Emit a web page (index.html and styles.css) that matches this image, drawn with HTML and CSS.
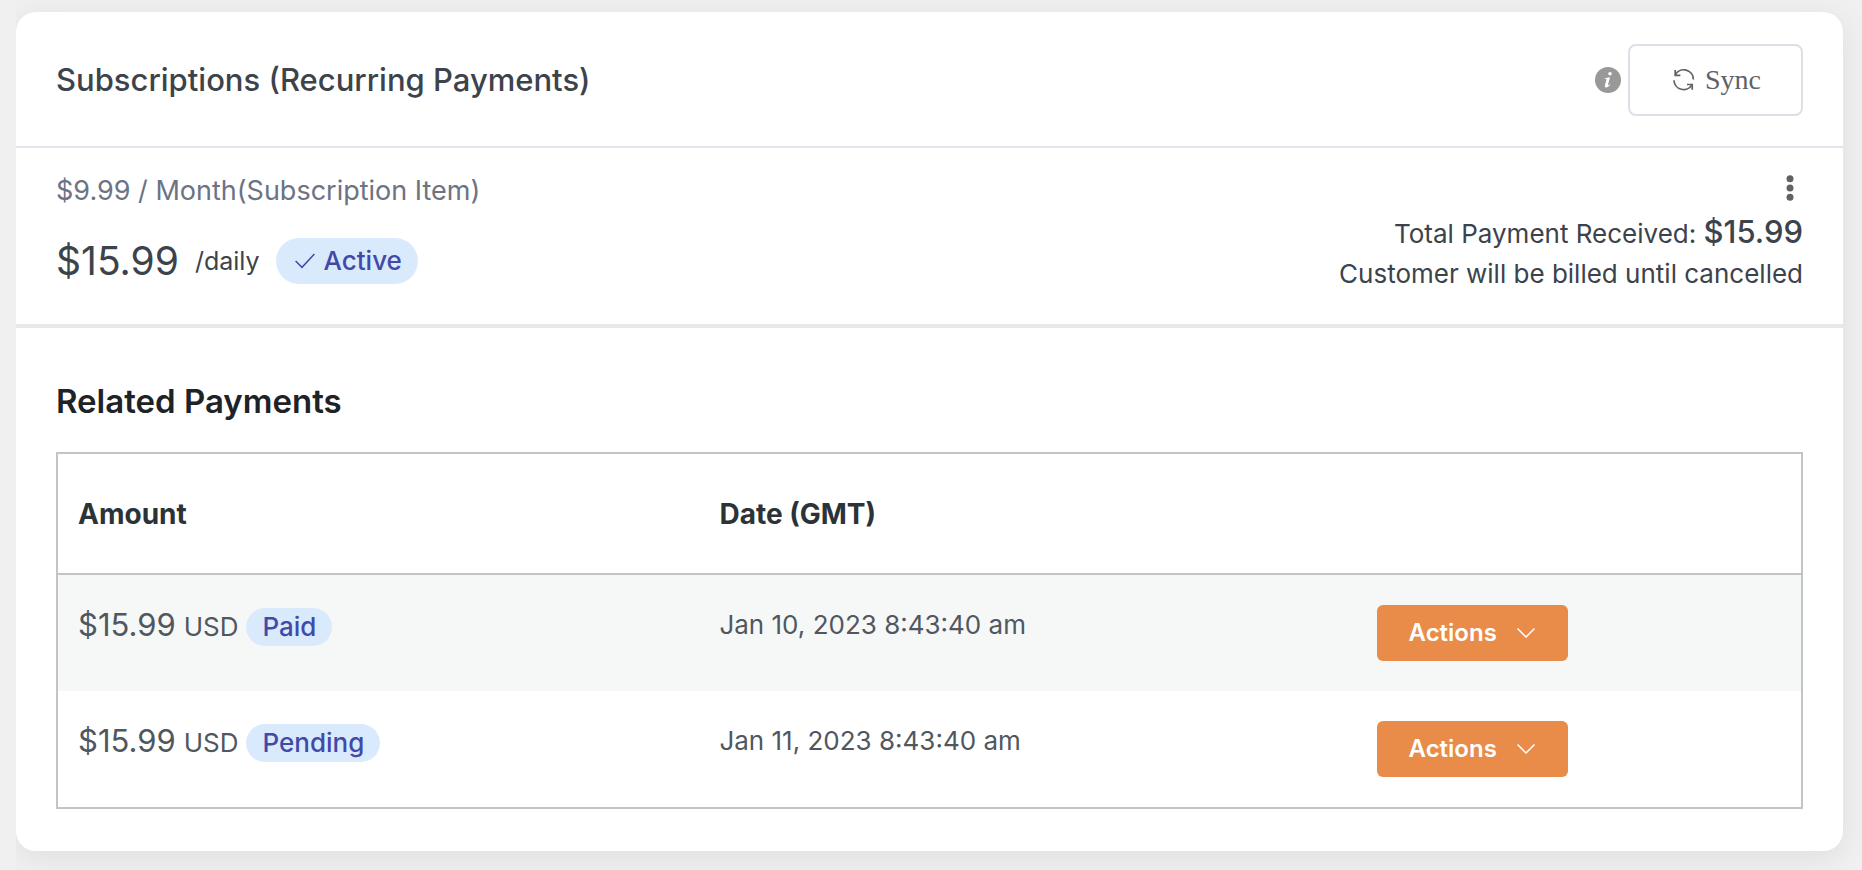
FILE: index.html
```html
<!DOCTYPE html>
<html lang="en">

<head>
    <meta charset="UTF-8">
    <meta name="viewport" content="width=device-width, initial-scale=1.0">
    <link rel="stylesheet" href="styles.css">
    <title>Subscriptions</title>
</head>

<body>
    <main class="page">
        <section class="card">
            <header class="card-header">
                <h1 class="card-title">Subscriptions (Recurring Payments)</h1>
                <div class="header-actions">
                    <svg class="info-icon" viewBox="0 0 26 26" role="img" aria-label="Info">
                        <circle cx="13" cy="13" r="13" fill="#999" />
                        <circle cx="15" cy="6.8" r="1.8" fill="#fff" />
                        <path d="M9.6 11.2 L15 10.2 L12.9 18 Q12.8 19 15.2 17.2 L15.5 17.6 Q13 20.8 10.9 20.6 Q9.3 20.3 9.9 18.2 L11.5 12.4 Q11.6 11.6 9.6 11.8 Z" fill="#fff" />
                    </svg>
                    <button type="button" class="sync-btn">
                        <svg class="sync-icon" viewBox="0 0 22 22" fill="none" stroke="#606266" stroke-width="1.7">
                            <path d="M2.4 5.8 A9.6 9.6 0 0 1 20.4 10.5" />
                            <path d="M2.2 1 V6.3 H7.4" />
                            <path d="M1 11.2 A9.6 9.6 0 0 0 19 15.6" />
                            <path d="M19.2 20.8 V15.5 H14" />
                        </svg>
                        Sync
                    </button>
                </div>
            </header>

            <div class="summary">
                <div class="plan">
                    <p class="plan-item">$9.99 / Month(Subscription Item)</p>
                    <div class="plan-price">
                        <span class="price">$15.99</span>
                        <span class="interval">/daily</span>
                        <span class="badge badge-active">
                            <svg class="check-icon" viewBox="0 0 20 16" fill="none" stroke="#424aa8" stroke-width="1.5">
                                <path d="M0.6 8 L7 14.3 L19.4 1" />
                            </svg>
                            Active
                        </span>
                    </div>
                </div>
                <div class="totals">
                    <button type="button" class="more-btn" aria-label="More">
                        <svg class="more-icon" viewBox="0 0 8 28" fill="#606266">
                            <circle cx="4" cy="3.7" r="3.5" />
                            <circle cx="4" cy="13" r="3.5" />
                            <circle cx="4" cy="22.3" r="3.5" />
                        </svg>
                    </button>
                    <p class="totals-line">Total Payment Received: <span class="total">$15.99</span></p>
                    <p class="totals-line">Customer will be billed until cancelled</p>
                </div>
            </div>

            <div class="related">
                <h2 class="related-title">Related Payments</h2>
                <table class="payments">
                    <thead>
                        <tr>
                            <th class="col-amount">Amount</th>
                            <th class="col-date">Date (GMT)</th>
                            <th class="col-actions"></th>
                        </tr>
                    </thead>
                    <tbody>
                        <tr>
                            <td>
                                <div class="amount-cell">
                                    <span class="amount">$15.99</span>
                                    <span>USD</span>
                                    <span class="badge">Paid</span>
                                </div>
                            </td>
                            <td>Jan 10, 2023 8:43:40 am</td>
                            <td>
                                <button type="button" class="actions-btn">
                                    Actions
                                    <svg class="chevron" viewBox="0 0 18 10" fill="none" stroke="#fff" stroke-width="1.5">
                                        <path d="M0.5 0.5 L9 9 L17.5 0.5" />
                                    </svg>
                                </button>
                            </td>
                        </tr>
                        <tr>
                            <td>
                                <div class="amount-cell">
                                    <span class="amount">$15.99</span>
                                    <span>USD</span>
                                    <span class="badge">Pending</span>
                                </div>
                            </td>
                            <td>Jan 11, 2023 8:43:40 am</td>
                            <td>
                                <button type="button" class="actions-btn">
                                    Actions
                                    <svg class="chevron" viewBox="0 0 18 10" fill="none" stroke="#fff" stroke-width="1.5">
                                        <path d="M0.5 0.5 L9 9 L17.5 0.5" />
                                    </svg>
                                </button>
                            </td>
                        </tr>
                    </tbody>
                </table>
            </div>
        </section>
    </main>
</body>

</html>
```
FILE: styles.css
```css
* {
    box-sizing: border-box;
}

body {
    margin: 0;
    background: #f0f0f0;
    color: #3c434a;
    font-family: Inter, "Liberation Sans", sans-serif;
    font-size: 26px;
    line-height: 40px;
}

h1,
h2,
p {
    margin: 0;
}

/* the card shadow is cut off on the left edge */
.page {
    margin-left: 16px;
    padding: 12px 19px 19px 0;
    overflow: hidden;
}

.card {
    background: #fff;
    border-radius: 20px;
    box-shadow: 0 6px 32px rgba(0, 0, 0, 0.08);
}

.card-header {
    display: flex;
    align-items: center;
    justify-content: space-between;
    padding: 32px 40px 30px;
    border-bottom: 2px solid #e2e6ec;
}

.card-title {
    font-size: 31px;
    font-weight: 500;
}

.header-actions {
    display: flex;
    align-items: center;
    gap: 7px;
}

.info-icon {
    width: 26px;
    height: 26px;
}

.sync-btn {
    display: flex;
    align-items: center;
    gap: 10px;
    padding: 14px 40px 14px 43px;
    background: #fff;
    border: 2px solid #dcdfe6;
    border-radius: 8px;
    color: #606266;
    font-family: "Liberation Serif", serif;
    font-size: 28px;
    line-height: 40px;
}

.sync-icon {
    width: 22px;
    height: 22px;
}

.summary {
    display: flex;
    justify-content: space-between;
    padding: 23px 40px 30px;
    border-bottom: 4px solid #e8e8e8;
}

.plan-item {
    color: #6b7385;
    font-size: 27px;
}

.plan-price {
    display: flex;
    align-items: center;
    padding-top: 27px;
}

.price {
    margin-right: 16px;
    font-size: 39px;
}

.interval {
    margin-right: 16px;
    font-size: 25px;
}

.badge {
    padding: 0 16px;
    background: #daeafd;
    border-radius: 20px;
    color: #424aa8;
    font-weight: 500;
    line-height: 38px;
}

.badge-active {
    display: flex;
    align-items: center;
    gap: 9px;
    padding: 4px 16px 4px 19px;
    border-radius: 24px;
}

.check-icon {
    width: 20px;
    height: 16px;
}

.totals {
    display: flex;
    flex-direction: column;
    align-items: flex-end;
}

.more-btn {
    display: flex;
    margin: 4px 9px 9px 0;
    padding: 0;
    background: none;
    border: 0;
}

.more-icon {
    width: 8px;
    height: 28px;
}

.total {
    font-size: 31px;
    font-weight: 500;
}

.related {
    padding: 53px 40px 42px;
}

.related-title {
    color: #1d2327;
    font-size: 33px;
    font-weight: 600;
}

.payments {
    width: 100%;
    margin-top: 31px;
    border: 2px solid #c3c4c7;
    border-spacing: 0;
    table-layout: fixed;
    color: #50575e;
}

.payments th {
    height: 121px;
    padding: 0 20px;
    border-bottom: 2px solid #c3c4c7;
    color: #2c3338;
    font-size: 28px;
    font-weight: 700;
    text-align: left;
}

.col-amount {
    width: 36.8%;
}

.col-date {
    width: 37.7%;
}

.payments td {
    padding: 30px 20px;
    vertical-align: top;
}

.payments tbody tr:nth-child(odd) {
    background: #f6f7f7;
}

.amount-cell {
    display: flex;
    align-items: baseline;
    gap: 8px;
}

.amount {
    font-size: 31px;
}

.actions-btn {
    display: flex;
    align-items: center;
    gap: 20px;
    padding: 8px 33px 8px 32px;
    background: #e98b49;
    border: 0;
    border-radius: 6px;
    color: #fff;
    font-family: inherit;
    font-size: 24px;
    font-weight: 600;
    line-height: 40px;
}

.chevron {
    width: 18px;
    height: 10px;
}
```
